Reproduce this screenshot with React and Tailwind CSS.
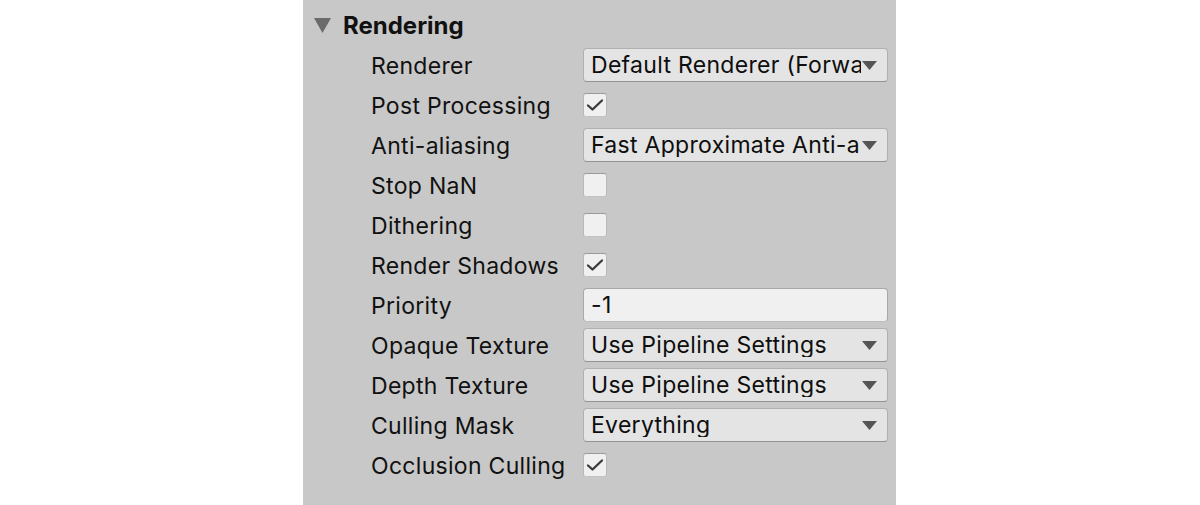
import React from "react";

const font = { fontFamily: "Inter, 'Noto Sans', sans-serif" };

function Check({ checked }) {
  return (
    <div className="w-[24px] h-[24px] rounded-[3px] bg-[#f0f0f0] border-t border-[#9a9a9a] border-x border-x-[#b8b8b8] border-b border-b-[#c4c4c4] flex items-center justify-center">
      {checked && (
        <svg width="20" height="16" viewBox="0 0 20 16">
          <path d="M3 8.5 L7.5 12.5 L17 3.5" fill="none" stroke="#3a3a3a" strokeWidth="2.3" strokeLinecap="round" strokeLinejoin="round" />
        </svg>
      )}
    </div>
  );
}

function Dropdown({ value }) {
  return (
    <div className="w-[305px] h-[34px] rounded-[4px] bg-[#e4e4e4] border border-[#b0b0b0] border-b-[#939393] flex items-center pl-[7px] pr-[10px]">
      <span className="flex-1 overflow-hidden whitespace-nowrap text-[23px] tracking-[0.3px] text-[#0e0e0e] leading-none pt-[1px]">{value}</span>
      <svg width="15" height="9" viewBox="0 0 15 9" className="shrink-0 ml-[1px]">
        <path d="M0 0 H15 L7.5 9 Z" fill="#555555" />
      </svg>
    </div>
  );
}

function TextField({ value }) {
  return (
    <div className="w-[305px] h-[34px] rounded-[4px] bg-[#f0f0f0] border border-[#a8a8a8] border-b-[#bcbcbc] flex items-center pl-[7px]">
      <span className="text-[23px] tracking-[0.3px] text-[#0e0e0e] leading-none pt-[1px]">{value}</span>
    </div>
  );
}

const rows = [
  ["Renderer", <Dropdown value="Default Renderer (Forward Renderer)" />],
  ["Post Processing", <Check checked />],
  ["Anti-aliasing", <Dropdown value="Fast Approximate Anti-aliasing (FXAA)" />],
  ["Stop NaN", <Check />],
  ["Dithering", <Check />],
  ["Render Shadows", <Check checked />],
  ["Priority", <TextField value="-1" />],
  ["Opaque Texture", <Dropdown value="Use Pipeline Settings" />],
  ["Depth Texture", <Dropdown value="Use Pipeline Settings" />],
  ["Culling Mask", <Dropdown value="Everything" />],
  ["Occlusion Culling", <Check checked />],
];

export default function App() {
  return (
    <div className="w-[1200px] h-[505px] bg-white flex justify-center" style={font}>
      <div className="w-[593px] h-[505px] bg-[#c8c8c8] pt-[5px] ml-[-1px]">
        <div className="h-[40px] flex items-center">
          <svg width="17" height="16" viewBox="0 0 17 16" className="ml-[11px] mr-[12px]">
            <path d="M0 1 H17 L8.5 16 Z" fill="#6b6b6b" />
          </svg>
          <span className="text-[24px] font-bold text-[#111111] leading-none pt-[2px]">Rendering</span>
        </div>
        {rows.map(([label, ctrl], i) => (
          <div key={i} className="h-[40px] flex items-center">
            <div className="w-[280px] pl-[68px] text-[23px] tracking-[0.3px] text-[#111111] leading-none whitespace-nowrap pt-[2px]">{label}</div>
            <div className="flex items-center">{ctrl}</div>
          </div>
        ))}
      </div>
    </div>
  );
}
